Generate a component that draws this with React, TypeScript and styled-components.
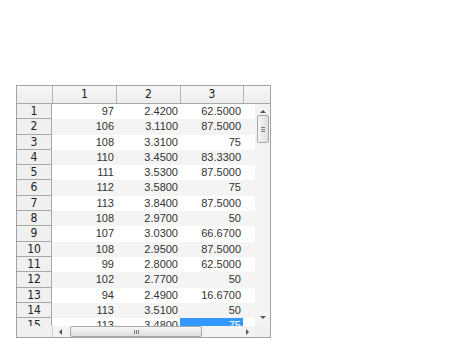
import styled, { createGlobalStyle } from "styled-components";

const GlobalStyle = createGlobalStyle`
  html, body {
    margin: 0;
    padding: 0;
    background: #ffffff;
  }
`;

const ROW_H = 15.3;
const HEAD_W = 36;
const COLS = [64, 64, 63];

const rows: [string, string, string][] = [
  ["97", "2.4200", "62.5000"],
  ["106", "3.1100", "87.5000"],
  ["108", "3.3100", "75"],
  ["110", "3.4500", "83.3300"],
  ["111", "3.5300", "87.5000"],
  ["112", "3.5800", "75"],
  ["113", "3.8400", "87.5000"],
  ["108", "2.9700", "50"],
  ["107", "3.0300", "66.6700"],
  ["108", "2.9500", "87.5000"],
  ["99", "2.8000", "62.5000"],
  ["102", "2.7700", "50"],
  ["94", "2.4900", "16.6700"],
  ["113", "3.5100", "50"],
  ["113", "3.4800", "75"],
];

const Page = styled.div`
  padding: 85px 0 0 16px;
`;

const Grid = styled.div`
  width: 253px;
  height: 251px;
  border: 1px solid #a3a3a3;
  background: #f0f0f0;
  display: flex;
  flex-direction: column;
  overflow: hidden;
`;

const HeaderRow = styled.div`
  display: flex;
  height: 17px;
  border-bottom: 1px solid #a8a8a8;
  background: linear-gradient(#f7f7f7, #ececec);
  flex-shrink: 0;
`;

const HeadCell = styled.div<{ $w?: number }>`
  width: ${(p) => (p.$w ? `${p.$w - 1}px` : "auto")};
  flex: ${(p) => (p.$w ? "none" : "1")};
  border-right: 1px solid #b4b4b4;
  font-family: "Liberation Sans Narrow", "DejaVu Sans Condensed", sans-serif;
  font-size: 12px;
  color: #222;
  line-height: 17px;
  text-align: center;
  &:last-child {
    border-right: none;
  }
`;

const Middle = styled.div`
  display: flex;
  height: 222px;
  flex-shrink: 0;
`;

const Viewport = styled.div`
  flex: 1;
  overflow: hidden;
  background: #ffffff;
`;

const Row = styled.div<{ $alt: boolean }>`
  display: flex;
  height: ${ROW_H}px;
  background: ${(p) => (p.$alt ? "#f4f4f4" : "#ffffff")};
`;

const RowHead = styled.div`
  width: ${HEAD_W - 1}px;
  flex: none;
  box-sizing: border-box;
  border-right: 1px solid #a8a8a8;
  border-bottom: 1px solid #a8a8a8;
  background: #f0f0f0;
  font-family: "Liberation Sans Narrow", "DejaVu Sans Condensed", sans-serif;
  font-size: 12px;
  color: #222;
  text-align: center;
  line-height: 14px;
`;

const Cell = styled.div<{ $w: number; $sel?: boolean }>`
  width: ${(p) => p.$w}px;
  flex: none;
  box-sizing: border-box;
  padding-right: 2px;
  text-align: right;
  font-family: "Liberation Sans", Arial, sans-serif;
  font-size: 11px;
  line-height: ${ROW_H}px;
  color: ${(p) => (p.$sel ? "#ffffff" : "#333")};
  background: ${(p) => (p.$sel ? "#3399ff" : "transparent")};
`;

const VScroll = styled.div`
  width: 15px;
  flex: none;
  background: #f3f3f3;
  display: flex;
  flex-direction: column;
  align-items: center;
  justify-content: space-between;
  padding: 6px 0 7px;
  box-sizing: border-box;
`;

const ThumbV = styled.div`
  width: 12px;
  height: 28px;
  margin-top: 2px;
  border: 1px solid #a9a9a9;
  border-radius: 2px;
  background: linear-gradient(90deg, #f6f6f6, #dedede);
  display: flex;
  flex-direction: column;
  align-items: center;
  justify-content: center;
  gap: 1px;
  box-sizing: border-box;
`;

const GripH = styled.span`
  width: 4px;
  height: 1px;
  background: #7a7a7a;
`;

const Track = styled.div`
  flex: 1;
  display: flex;
  flex-direction: column;
  align-items: center;
`;

const Arrow = styled.span<{ $dir: "up" | "down" | "left" | "right" }>`
  width: 0;
  height: 0;
  flex: none;
  ${(p) =>
    p.$dir === "up"
      ? "border-left: 3px solid transparent; border-right: 3px solid transparent; border-bottom: 3px solid #555;"
      : p.$dir === "down"
      ? "border-left: 3px solid transparent; border-right: 3px solid transparent; border-top: 3px solid #555;"
      : p.$dir === "left"
      ? "border-top: 3px solid transparent; border-bottom: 3px solid transparent; border-right: 3px solid #555;"
      : "border-top: 3px solid transparent; border-bottom: 3px solid transparent; border-left: 3px solid #555;"}
`;

const Bottom = styled.div`
  display: flex;
  flex: 1;
`;

const Corner = styled.div<{ $w: number; $line?: boolean }>`
  width: ${(p) => p.$w}px;
  flex: none;
  background: #f0f0f0;
  box-sizing: border-box;
  ${(p) => (p.$line ? "border-right: 1px solid #d0d0d0;" : "")}
`;

const HScroll = styled.div`
  flex: 1;
  background: #f3f3f3;
  display: flex;
  align-items: center;
  padding: 0 6px 0 6px;
  gap: 8px;
`;

const ThumbH = styled.div`
  width: 132px;
  height: 11px;
  border: 1px solid #a9a9a9;
  border-radius: 2px;
  background: linear-gradient(#f6f6f6, #dedede);
  display: flex;
  align-items: center;
  justify-content: center;
  gap: 1px;
  box-sizing: border-box;
`;

const GripV = styled.span`
  width: 1px;
  height: 4px;
  background: #7a7a7a;
`;

const Spacer = styled.div`
  flex: 1;
`;

export default function App() {
  return (
    <Page>
      <GlobalStyle />
      <Grid>
        <HeaderRow>
          <HeadCell $w={HEAD_W} />
          {COLS.map((w, i) => (
            <HeadCell key={i} $w={w}>
              {i + 1}
            </HeadCell>
          ))}
          <HeadCell />
        </HeaderRow>
        <Middle>
          <Viewport>
            {rows.map((r, i) => (
              <Row key={i} $alt={i % 2 === 1}>
                <RowHead>{i + 1}</RowHead>
                {r.map((v, j) => (
                  <Cell key={j} $w={COLS[j]} $sel={i === 14 && j === 2}>
                    {v}
                  </Cell>
                ))}
              </Row>
            ))}
          </Viewport>
          <VScroll>
            <Arrow $dir="up" />
            <Track>
              <ThumbV>
                <GripH />
                <GripH />
                <GripH />
              </ThumbV>
            </Track>
            <Arrow $dir="down" />
          </VScroll>
        </Middle>
        <Bottom>
          <Corner $w={HEAD_W} $line />
          <HScroll>
            <Arrow $dir="left" />
            <ThumbH>
              <GripV />
              <GripV />
              <GripV />
            </ThumbH>
            <Spacer />
            <Arrow $dir="right" />
          </HScroll>
          <Corner $w={15} />
        </Bottom>
      </Grid>
    </Page>
  );
}
